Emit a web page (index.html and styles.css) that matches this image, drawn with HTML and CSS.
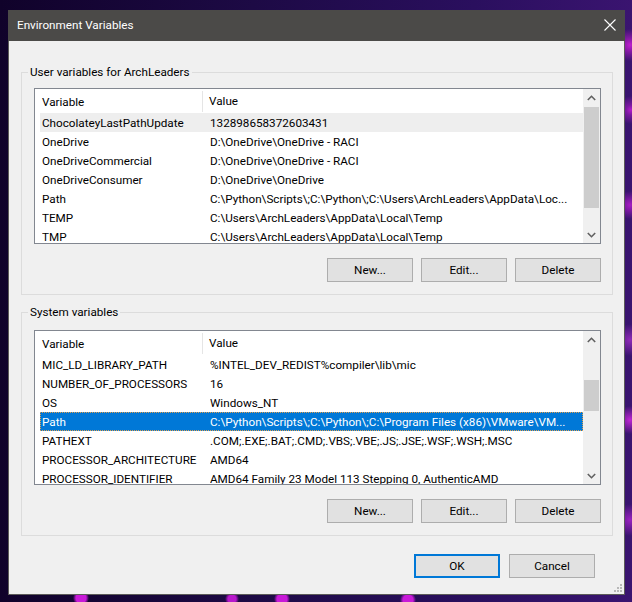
FILE: index.html
```html
<!DOCTYPE html>
<html lang="en">
<head>
<meta charset="utf-8">
<title>Environment Variables</title>
<link rel="stylesheet" href="styles.css">
</head>
<body>
<div class="window">
  <div class="titlebar">
    <span class="title">Environment Variables</span>
    <svg class="close" width="12" height="12" viewBox="0 0 12 12"><path d="M0.5 0.5 L11.5 11.5 M11.5 0.5 L0.5 11.5" stroke="#ffffff" stroke-width="1.1" fill="none"/></svg>
  </div>
  <div class="content">
    <fieldset class="group group-user">
      <legend>User variables for ArchLeaders</legend>
      <div class="list">
        <div class="table">
          <div class="header"><span class="hcol hname">Variable</span><span class="hcol hvalue">Value</span></div>
          <div class="rows">
            <div class="row row-sel-inactive"><span class="name">ChocolateyLastPathUpdate</span><span class="value">132898658372603431</span></div>
            <div class="row"><span class="name">OneDrive</span><span class="value">D:\OneDrive\OneDrive - RACI</span></div>
            <div class="row"><span class="name">OneDriveCommercial</span><span class="value">D:\OneDrive\OneDrive - RACI</span></div>
            <div class="row"><span class="name">OneDriveConsumer</span><span class="value">D:\OneDrive\OneDrive</span></div>
            <div class="row"><span class="name">Path</span><span class="value">C:\Python\Scripts\;C:\Python\;C:\Users\ArchLeaders\AppData\Loc...</span></div>
            <div class="row"><span class="name">TEMP</span><span class="value">C:\Users\ArchLeaders\AppData\Local\Temp</span></div>
            <div class="row"><span class="name">TMP</span><span class="value">C:\Users\ArchLeaders\AppData\Local\Temp</span></div>
          </div>
        </div>
        <div class="scrollbar">
          <div class="arrow"><svg width="9" height="6" viewBox="0 0 9 6"><path d="M0.8 5 L4.5 1.3 L8.2 5" stroke="#606060" stroke-width="1.6" fill="none"/></svg></div>
          <div class="track"><div class="thumb thumb-user"></div></div>
          <div class="arrow"><svg width="9" height="6" viewBox="0 0 9 6"><path d="M0.8 1 L4.5 4.7 L8.2 1" stroke="#606060" stroke-width="1.6" fill="none"/></svg></div>
        </div>
      </div>
      <div class="buttons">
        <button class="btn">New...</button>
        <button class="btn">Edit...</button>
        <button class="btn">Delete</button>
      </div>
    </fieldset>

    <fieldset class="group group-sys">
      <legend>System variables</legend>
      <div class="list list-sys">
        <div class="table">
          <div class="header"><span class="hcol hname">Variable</span><span class="hcol hvalue">Value</span></div>
          <div class="rows">
            <div class="row"><span class="name">MIC_LD_LIBRARY_PATH</span><span class="value">%INTEL_DEV_REDIST%compiler\lib\mic</span></div>
            <div class="row"><span class="name">NUMBER_OF_PROCESSORS</span><span class="value">16</span></div>
            <div class="row"><span class="name">OS</span><span class="value">Windows_NT</span></div>
            <div class="row row-sel"><span class="name">Path</span><span class="value">C:\Python\Scripts\;C:\Python\;C:\Program Files (x86)\VMware\VM...</span></div>
            <div class="row"><span class="name">PATHEXT</span><span class="value">.COM;.EXE;.BAT;.CMD;.VBS;.VBE;.JS;.JSE;.WSF;.WSH;.MSC</span></div>
            <div class="row"><span class="name">PROCESSOR_ARCHITECTURE</span><span class="value">AMD64</span></div>
            <div class="row"><span class="name">PROCESSOR_IDENTIFIER</span><span class="value">AMD64 Family 23 Model 113 Stepping 0, AuthenticAMD</span></div>
          </div>
        </div>
        <div class="scrollbar">
          <div class="arrow"><svg width="9" height="6" viewBox="0 0 9 6"><path d="M0.8 5 L4.5 1.3 L8.2 5" stroke="#606060" stroke-width="1.6" fill="none"/></svg></div>
          <div class="track"><div class="thumb thumb-sys"></div></div>
          <div class="arrow"><svg width="9" height="6" viewBox="0 0 9 6"><path d="M0.8 1 L4.5 4.7 L8.2 1" stroke="#606060" stroke-width="1.6" fill="none"/></svg></div>
        </div>
      </div>
      <div class="buttons">
        <button class="btn">New...</button>
        <button class="btn">Edit...</button>
        <button class="btn">Delete</button>
      </div>
    </fieldset>

    <div class="actions">
      <button class="btn btn-default">OK</button>
      <button class="btn">Cancel</button>
    </div>
  </div>
  <svg class="grip" width="10" height="10" viewBox="0 0 10 10">
    <rect x="7" y="1" width="2" height="2" fill="#b8b8b8"/>
    <rect x="4" y="4" width="2" height="2" fill="#b8b8b8"/>
    <rect x="7" y="4" width="2" height="2" fill="#b8b8b8"/>
    <rect x="1" y="7" width="2" height="2" fill="#b8b8b8"/>
    <rect x="4" y="7" width="2" height="2" fill="#b8b8b8"/>
    <rect x="7" y="7" width="2" height="2" fill="#b8b8b8"/>
  </svg>
</div>
</body>
</html>
```
FILE: styles.css
```css
* { box-sizing: border-box; }

html, body {
  margin: 0;
  padding: 0;
}

body {
  width: 632px;
  height: 602px;
  overflow: hidden;
  font-family: Roboto, "Liberation Sans", sans-serif;
  font-size: 11.7px;
  color: #000;
  background-color: #12032a;
  background-image:
    radial-gradient(circle at 630px 45px, #c01fd0 0, #8a1aa8 6px, rgba(90,20,140,0) 16px),
    radial-gradient(circle at 631px 110px, #b41ccc 0, #7a18a0 5px, rgba(90,20,140,0) 14px),
    radial-gradient(circle at 630px 205px, #a81cc4 0, rgba(120,30,160,0) 14px),
    radial-gradient(circle at 630px 340px, #8f2ab8 0, rgba(120,30,160,0) 16px),
    radial-gradient(circle at 630px 420px, #c026d4 0, rgba(120,30,160,0) 14px),
    radial-gradient(circle at 630px 520px, #9a22c0 0, rgba(120,30,160,0) 16px),
    radial-gradient(circle at 81px 598px, #c81ad8 0, #c81ad8 5px, rgba(150,20,180,0) 8px),
    radial-gradient(circle at 232px 599px, #b818cc 0, #b818cc 4px, rgba(150,20,180,0) 7px),
    radial-gradient(circle at 282px 599px, #c81ad8 0, #c81ad8 5px, rgba(150,20,180,0) 8px),
    radial-gradient(circle at 408px 600px, #c81ad8 0, #c81ad8 5px, rgba(150,20,180,0) 8px),
    linear-gradient(90deg, #10022a 0%, #1d0a45 40%, #2a0f5e 75%, #3a1470 100%);
  background-repeat: no-repeat;
}

.window {
  position: relative;
  margin: 10px 0 0 8px;
  width: 617px;
  height: 585px;
  background: #f0f0f0;
  border: 1px solid #5c5b59;
  border-top: none;
  display: flex;
  flex-direction: column;
}

.titlebar {
  height: 31px;
  margin: 0 -1px;
  background: #4b4a48;
  color: #ffffff;
  display: flex;
  align-items: center;
  justify-content: space-between;
  padding: 0 9px 1px 9px;
  flex: none;
}

.title {
  font-size: 11.7px;
  letter-spacing: 0;
}

.close {
  display: block;
  margin-right: 0;
}

.content {
  padding: 23px 11px 0 12px;
  flex: 1;
  display: flex;
  flex-direction: column;
}

.group {
  margin: 0;
  padding: 8px 11px 12px 12px;
  border: 1px solid #dcdcdc;
  min-width: 0;
}

.group-sys {
  margin-top: 9px;
  padding-top: 10px;
}

.group legend {
  padding: 0 2px;
  margin-left: -6px;
  line-height: 16px;
  font-size: 11.7px;
  color: #000;
}

.list {
  height: 156px;
  border: 1px solid #828790;
  background: #ffffff;
  display: flex;
}

.list-sys {
  height: 155px;
}

.table {
  flex: 1;
  min-width: 0;
  display: flex;
  flex-direction: column;
  overflow: hidden;
}

.header {
  height: 24px;
  flex: none;
  display: flex;
  align-items: stretch;
}

.hcol {
  display: flex;
  align-items: center;
  color: #000;
}

.hname {
  width: 168px;
  padding-left: 7px;
  border-right: 1px solid #e5e5e5;
  margin: 2px 0 1px 0;
}

.hvalue {
  padding-left: 6px;
}

.rows {
  flex: 1;
  overflow: hidden;
  padding-left: 5px;
}

.row {
  height: 19px;
  display: flex;
  align-items: center;
  white-space: nowrap;
  padding-left: 2px;
}

.row-sel-inactive {
  background: #eeeeee;
}

.row-sel {
  background: #0078d7;
  color: #ffffff;
  outline: 1px dotted #e0a050;
  outline-offset: -1px;
}

.name {
  width: 168px;
  flex: none;
  overflow: hidden;
}

.value {
  overflow: hidden;
  flex: 1;
  min-width: 0;
}

.scrollbar {
  width: 17px;
  flex: none;
  background: #f0f0f0;
  display: flex;
  flex-direction: column;
}

.arrow {
  height: 17px;
  flex: none;
  display: flex;
  align-items: center;
  justify-content: center;
}

.track {
  flex: 1;
  padding: 0 1px;
}

.thumb {
  background: #cdcdcd;
  width: 100%;
}

.thumb-user {
  margin-top: 1px;
  height: 101px;
}

.thumb-sys {
  margin-top: 32px;
  height: 31px;
}

.buttons {
  margin-top: 14px;
  display: flex;
  justify-content: flex-end;
  gap: 8px;
}

.btn {
  width: 86px;
  height: 24px;
  margin: 0;
  padding: 0;
  background: #e1e1e1;
  border: 1px solid #adadad;
  border-radius: 0;
  font-family: Roboto, "Liberation Sans", sans-serif;
  font-size: 11.7px;
  color: #000;
}

.btn-default {
  border: 2px solid #0078d7;
}

.actions {
  margin-top: 18px;
  padding-right: 18px;
  display: flex;
  justify-content: flex-end;
  gap: 9px;
}

.grip {
  position: absolute;
  right: 1px;
  bottom: 1px;
}
```
